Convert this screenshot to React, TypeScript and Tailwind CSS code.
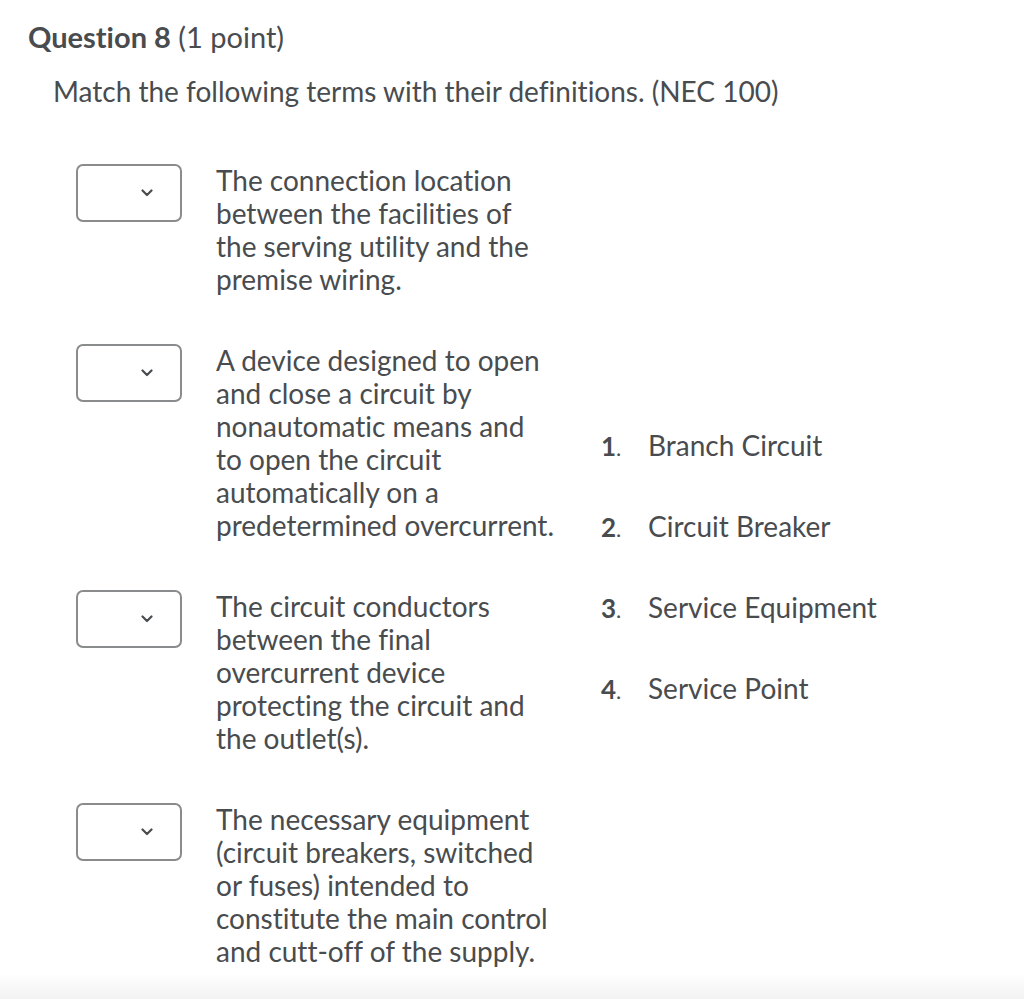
import * as React from "react";

const definitions = [
  "The connection location between the facilities of the serving utility and the premise wiring.",
  "A device designed to open and close a circuit by nonautomatic means and to open the circuit automatically on a predetermined overcurrent.",
  "The circuit conductors between the final overcurrent device protecting the circuit and the outlet(s).",
  "The necessary equipment (circuit breakers, switched or fuses) intended to constitute the main control and cutt-off of the supply.",
];

const choices = ["Branch Circuit", "Circuit Breaker", "Service Equipment", "Service Point"];

function SelectBox() {
  return (
    <div className="w-[106px] h-[58px] shrink-0 rounded-[7px] border-2 border-[#8a8b8c] bg-white flex items-center justify-end pr-[27px]">
      <svg width="12" height="8" viewBox="0 0 12 8" fill="none">
        <path d="M1.5 1.5 L6 6 L10.5 1.5" stroke="#494c4e" strokeWidth="2.2" strokeLinecap="round" strokeLinejoin="round" />
      </svg>
    </div>
  );
}

export default function App() {
  return (
    <div
      className="relative min-h-[999px] bg-white text-[#494c4e] overflow-hidden [font-variant-ligatures:none]"
      style={{ fontFamily: "Lato, 'Open Sans', sans-serif" }}
    >
      <div className="pl-[28px] pt-[20px]">
        <h2 className="text-[29px] leading-[33px]">
          <span className="font-bold">Question 8</span> (1 point)
        </h2>
        <p className="mt-[22px] ml-[25px] text-[28px] leading-[33px]">
          Match the following terms with their definitions. (NEC 100)
        </p>

        <div className="mt-[56px] ml-[48px] flex items-center">
          <div className="flex flex-col gap-[48px]">
            {definitions.map((d, i) => (
              <div key={i} className="flex items-start">
                <SelectBox />
                <div className="ml-[34px] w-[339px] text-[28px] leading-[33px]">{d}</div>
              </div>
            ))}
          </div>
          <ol className="ml-[46px] mt-[4px] flex flex-col gap-[46px]">
            {choices.map((c, i) => (
              <li key={i} className="flex items-baseline text-[28px] leading-[33px]">
                <span className="w-[47px] shrink-0 text-[22px]">
                  <span className="font-bold text-[26px]">{i + 1}</span>.
                </span>
                <span>{c}</span>
              </li>
            ))}
          </ol>
        </div>
      </div>
      <div className="absolute bottom-0 left-0 right-0 h-[26px] bg-gradient-to-b from-white to-[#f2f2f2]" />
    </div>
  );
}
